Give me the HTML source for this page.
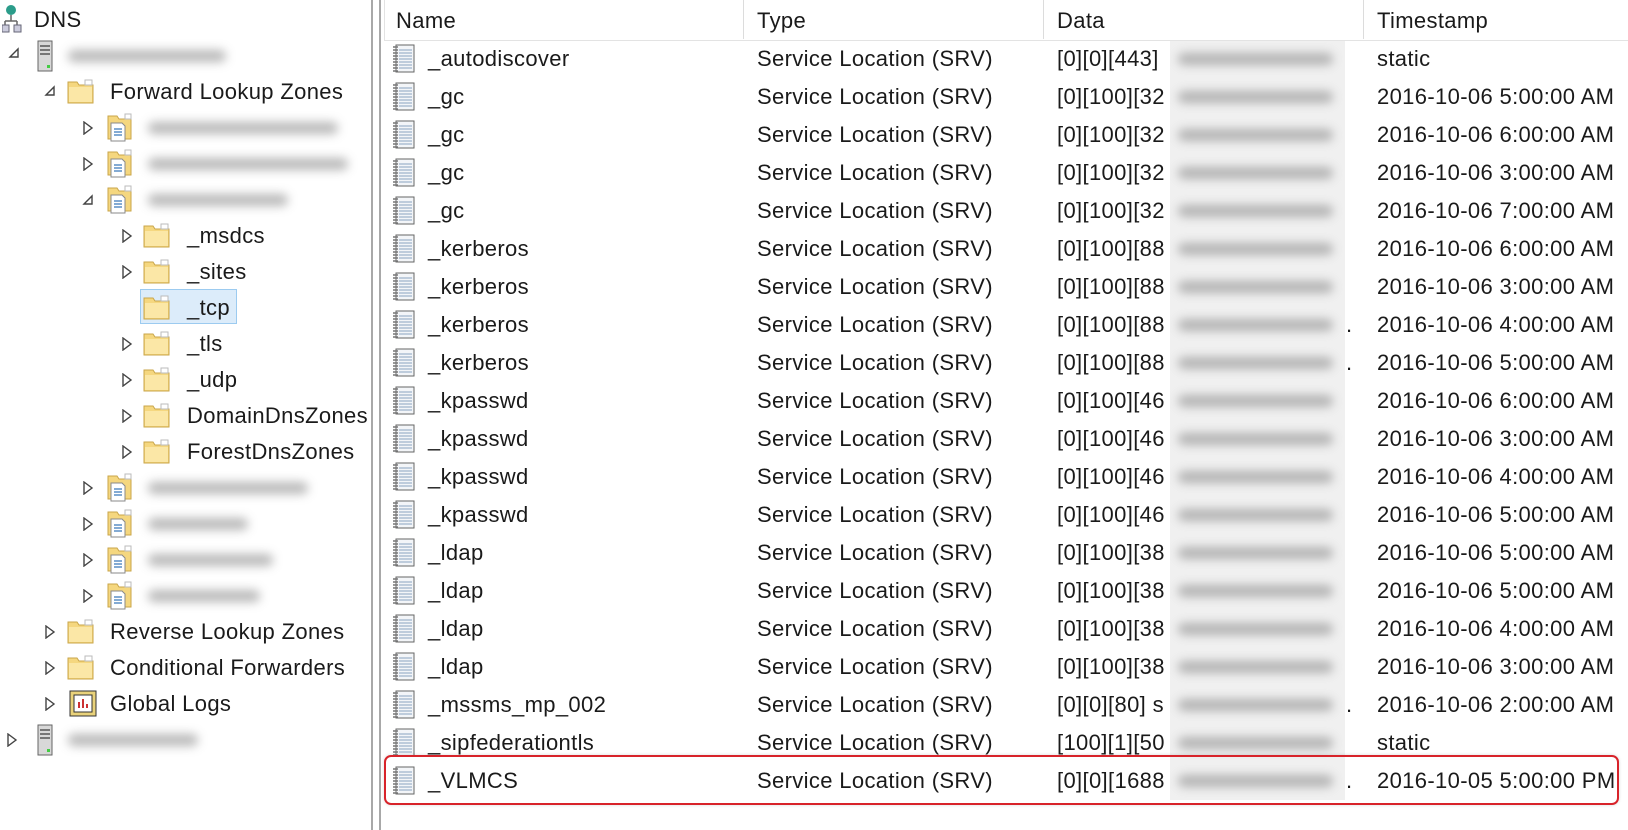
<!DOCTYPE html>
<html><head><meta charset="utf-8">
<style>
body{margin:0;width:1628px;height:830px;background:#fff;overflow:hidden;font-family:"Liberation Sans",sans-serif;font-size:22px;letter-spacing:.35px;color:#1a1a1a;position:relative}
.a{position:absolute;white-space:nowrap}
#left{position:absolute;left:0;top:0;width:371px;height:830px;overflow:hidden}
.tr{position:absolute;height:36px;line-height:36px;white-space:nowrap}
.blur{position:absolute;background:#8a8a8a;filter:blur(5px);opacity:.6;height:12px;border-radius:6px}
.rr{position:absolute;left:384px;height:38px;line-height:37px;width:1244px}
.rr span{position:absolute}
.hd span{position:absolute;top:0;height:39px;border-right:1px solid #dcdcdc}
</style></head><body>
<svg width="0" height="0" style="position:absolute">
<defs>
<symbol id="fold" viewBox="0 0 28 26"><path d="M1 4h9l2 3h14v18H1z" fill="#f5d77f" stroke="#c9a64a"/><path d="M2 9h23v15H2z" fill="#fbe7a6"/><path d="M18 2h7v5h-7z" fill="#fff" stroke="#bbb"/></symbol>
<symbol id="zone" viewBox="0 0 28 30"><path d="M3 3h9l2 3h12v20H3z" fill="#f5d77f" stroke="#c9a64a"/><path d="M6 10h11l3 3v15H6z" fill="#fff" stroke="#8a8a8a"/><path d="M9 16h8M9 19h8M9 22h8" stroke="#5b8fc6" stroke-width="1.5"/><path d="M20 1h6v5h-6z" fill="#fff" stroke="#bbb"/></symbol>
<symbol id="rec" viewBox="0 0 24 30"><rect x="4" y="1" width="18" height="27" fill="#f3f5f8" stroke="#666"/><path d="M7 6h13M7 9h13M7 12h13M7 15h13M7 18h13M7 21h13M7 24h13" stroke="#8aa2c0"/><path d="M1 3h5M1 6h5M1 9h5M1 12h5M1 15h5M1 18h5M1 21h5M1 24h5M1 27h5" stroke="#777" stroke-width="1.4"/></symbol>
<symbol id="srv" viewBox="0 0 18 32"><rect x="2" y="1" width="14" height="30" fill="#d8d8d8" stroke="#666"/><path d="M4 6h10M4 10h10M4 14h10" stroke="#555" stroke-width="1.5"/><rect x="11" y="25" width="3" height="3" fill="#4c4"/></symbol>
<symbol id="opn" viewBox="0 0 12 12"><path d="M2 10L10 2V10Z" fill="none" stroke="#444" stroke-width="1.4"/></symbol>
<symbol id="cls" viewBox="0 0 12 14"><path d="M2 1L10 7L2 13Z" fill="#fff" stroke="#444" stroke-width="1.4"/></symbol>
</defs></svg>

<div id="left">
<svg class="a" style="left:2px;top:4px" width="28" height="30" viewBox="0 0 28 30"><circle cx="9" cy="6" r="5" fill="#2b9c8a"/><path d="M9 11v6M3 17h12M3 17v5M15 17v5" stroke="#666" stroke-width="1.5"/><rect x="0" y="21" width="7" height="7" fill="#ccd" stroke="#667"/><rect x="12" y="21" width="7" height="7" fill="#ccd" stroke="#667"/></svg>
<div class="tr" style="left:34px;top:2px">DNS</div>
<svg class="a" style="left:8px;top:47px" width="12" height="12"><use href="#opn"/></svg>
<svg class="a" style="left:36px;top:40px" width="18" height="32"><use href="#srv"/></svg>
<div class="blur" style="left:68px;top:50px;width:158px"></div>
<svg class="a" style="left:44px;top:85px" width="12" height="12"><use href="#opn"/></svg>
<svg class="a" style="left:67px;top:78px" width="28" height="26"><use href="#fold"/></svg>
<div class="tr" style="left:110px;top:74px">Forward Lookup Zones</div>
<svg class="a" style="left:82px;top:121px" width="12" height="14"><use href="#cls"/></svg>
<svg class="a" style="left:105px;top:113px" width="28" height="30"><use href="#zone"/></svg>
<div class="blur" style="left:148px;top:122px;width:190px"></div>
<svg class="a" style="left:82px;top:157px" width="12" height="14"><use href="#cls"/></svg>
<svg class="a" style="left:105px;top:149px" width="28" height="30"><use href="#zone"/></svg>
<div class="blur" style="left:148px;top:158px;width:200px"></div>
<svg class="a" style="left:82px;top:194px" width="12" height="12"><use href="#opn"/></svg>
<svg class="a" style="left:105px;top:185px" width="28" height="30"><use href="#zone"/></svg>
<div class="blur" style="left:148px;top:194px;width:140px"></div>
<svg class="a" style="left:121px;top:229px" width="12" height="14"><use href="#cls"/></svg>
<svg class="a" style="left:143px;top:222px" width="28" height="26"><use href="#fold"/></svg>
<div class="tr" style="left:187px;top:218px">_msdcs</div>
<svg class="a" style="left:121px;top:265px" width="12" height="14"><use href="#cls"/></svg>
<svg class="a" style="left:143px;top:258px" width="28" height="26"><use href="#fold"/></svg>
<div class="tr" style="left:187px;top:254px">_sites</div>
<div class="a" style="left:140px;top:289px;width:97px;height:35px;background:#dcecfa;border:1px solid #9ccbf0;box-sizing:border-box"></div>
<svg class="a" style="left:143px;top:294px" width="28" height="26"><use href="#fold"/></svg>
<div class="tr" style="left:187px;top:290px">_tcp</div>
<svg class="a" style="left:121px;top:337px" width="12" height="14"><use href="#cls"/></svg>
<svg class="a" style="left:143px;top:330px" width="28" height="26"><use href="#fold"/></svg>
<div class="tr" style="left:187px;top:326px">_tls</div>
<svg class="a" style="left:121px;top:373px" width="12" height="14"><use href="#cls"/></svg>
<svg class="a" style="left:143px;top:366px" width="28" height="26"><use href="#fold"/></svg>
<div class="tr" style="left:187px;top:362px">_udp</div>
<svg class="a" style="left:121px;top:409px" width="12" height="14"><use href="#cls"/></svg>
<svg class="a" style="left:143px;top:402px" width="28" height="26"><use href="#fold"/></svg>
<div class="tr" style="left:187px;top:398px">DomainDnsZones</div>
<svg class="a" style="left:121px;top:445px" width="12" height="14"><use href="#cls"/></svg>
<svg class="a" style="left:143px;top:438px" width="28" height="26"><use href="#fold"/></svg>
<div class="tr" style="left:187px;top:434px">ForestDnsZones</div>
<svg class="a" style="left:82px;top:481px" width="12" height="14"><use href="#cls"/></svg>
<svg class="a" style="left:105px;top:473px" width="28" height="30"><use href="#zone"/></svg>
<div class="blur" style="left:148px;top:482px;width:160px"></div>
<svg class="a" style="left:82px;top:517px" width="12" height="14"><use href="#cls"/></svg>
<svg class="a" style="left:105px;top:509px" width="28" height="30"><use href="#zone"/></svg>
<div class="blur" style="left:148px;top:518px;width:100px"></div>
<svg class="a" style="left:82px;top:553px" width="12" height="14"><use href="#cls"/></svg>
<svg class="a" style="left:105px;top:545px" width="28" height="30"><use href="#zone"/></svg>
<div class="blur" style="left:148px;top:554px;width:125px"></div>
<svg class="a" style="left:82px;top:589px" width="12" height="14"><use href="#cls"/></svg>
<svg class="a" style="left:105px;top:581px" width="28" height="30"><use href="#zone"/></svg>
<div class="blur" style="left:148px;top:590px;width:112px"></div>
<svg class="a" style="left:44px;top:625px" width="12" height="14"><use href="#cls"/></svg>
<svg class="a" style="left:67px;top:618px" width="28" height="26"><use href="#fold"/></svg>
<div class="tr" style="left:110px;top:614px">Reverse Lookup Zones</div>
<svg class="a" style="left:44px;top:661px" width="12" height="14"><use href="#cls"/></svg>
<svg class="a" style="left:67px;top:654px" width="28" height="26"><use href="#fold"/></svg>
<div class="tr" style="left:110px;top:650px">Conditional Forwarders</div>
<svg class="a" style="left:44px;top:697px" width="12" height="14"><use href="#cls"/></svg>
<svg class="a" style="left:68px;top:688px" width="30" height="30" viewBox="0 0 30 30"><rect x="2" y="3" width="26" height="25" fill="#e9d27a" stroke="#333"/><rect x="6" y="7" width="18" height="17" fill="#fff" stroke="#333"/><path d="M11 20v-6M15 20v-9M19 20v-4" stroke="#c33" stroke-width="2"/></svg>
<div class="tr" style="left:110px;top:686px">Global Logs</div>
<svg class="a" style="left:6px;top:733px" width="12" height="14"><use href="#cls"/></svg>
<svg class="a" style="left:36px;top:724px" width="18" height="32"><use href="#srv"/></svg>
<div class="blur" style="left:68px;top:734px;width:130px"></div>
</div>

<div class="a" style="left:371px;top:0;width:2px;height:830px;background:#a8a8a8"></div>
<div class="a" style="left:379px;top:0;width:2px;height:830px;background:#a8a8a8"></div>

<div class="a hd" style="left:384px;top:0;width:1244px;height:40px;border-bottom:1px solid #e3e3e3;border-left:1px solid #e3e3e3">
<span style="left:0;width:358px"></span><span style="left:359px;width:299px"></span><span style="left:659px;width:319px"></span>
</div>
<div class="a" style="left:396px;top:2px;line-height:38px">Name</div>
<div class="a" style="left:757px;top:2px;line-height:38px">Type</div>
<div class="a" style="left:1057px;top:2px;line-height:38px">Data</div>
<div class="a" style="left:1377px;top:2px;line-height:38px">Timestamp</div>

<div class="rr" style="top:40px"><svg style="position:absolute;left:8px;top:4px" width="24" height="30"><use href="#rec"/></svg><span style="left:44px">_autodiscover</span><span style="left:373px">Service Location (SRV)</span><span style="left:673px">[0][0][443]</span><span style="left:993px">static</span></div>
<div class="rr" style="top:78px"><svg style="position:absolute;left:8px;top:4px" width="24" height="30"><use href="#rec"/></svg><span style="left:44px">_gc</span><span style="left:373px">Service Location (SRV)</span><span style="left:673px">[0][100][32</span><span style="left:993px">2016-10-06 5:00:00 AM</span></div>
<div class="rr" style="top:116px"><svg style="position:absolute;left:8px;top:4px" width="24" height="30"><use href="#rec"/></svg><span style="left:44px">_gc</span><span style="left:373px">Service Location (SRV)</span><span style="left:673px">[0][100][32</span><span style="left:993px">2016-10-06 6:00:00 AM</span></div>
<div class="rr" style="top:154px"><svg style="position:absolute;left:8px;top:4px" width="24" height="30"><use href="#rec"/></svg><span style="left:44px">_gc</span><span style="left:373px">Service Location (SRV)</span><span style="left:673px">[0][100][32</span><span style="left:993px">2016-10-06 3:00:00 AM</span></div>
<div class="rr" style="top:192px"><svg style="position:absolute;left:8px;top:4px" width="24" height="30"><use href="#rec"/></svg><span style="left:44px">_gc</span><span style="left:373px">Service Location (SRV)</span><span style="left:673px">[0][100][32</span><span style="left:993px">2016-10-06 7:00:00 AM</span></div>
<div class="rr" style="top:230px"><svg style="position:absolute;left:8px;top:4px" width="24" height="30"><use href="#rec"/></svg><span style="left:44px">_kerberos</span><span style="left:373px">Service Location (SRV)</span><span style="left:673px">[0][100][88</span><span style="left:993px">2016-10-06 6:00:00 AM</span></div>
<div class="rr" style="top:268px"><svg style="position:absolute;left:8px;top:4px" width="24" height="30"><use href="#rec"/></svg><span style="left:44px">_kerberos</span><span style="left:373px">Service Location (SRV)</span><span style="left:673px">[0][100][88</span><span style="left:993px">2016-10-06 3:00:00 AM</span></div>
<div class="rr" style="top:306px"><svg style="position:absolute;left:8px;top:4px" width="24" height="30"><use href="#rec"/></svg><span style="left:44px">_kerberos</span><span style="left:373px">Service Location (SRV)</span><span style="left:673px">[0][100][88</span><span style="left:962px">.</span><span style="left:993px">2016-10-06 4:00:00 AM</span></div>
<div class="rr" style="top:344px"><svg style="position:absolute;left:8px;top:4px" width="24" height="30"><use href="#rec"/></svg><span style="left:44px">_kerberos</span><span style="left:373px">Service Location (SRV)</span><span style="left:673px">[0][100][88</span><span style="left:962px">.</span><span style="left:993px">2016-10-06 5:00:00 AM</span></div>
<div class="rr" style="top:382px"><svg style="position:absolute;left:8px;top:4px" width="24" height="30"><use href="#rec"/></svg><span style="left:44px">_kpasswd</span><span style="left:373px">Service Location (SRV)</span><span style="left:673px">[0][100][46</span><span style="left:993px">2016-10-06 6:00:00 AM</span></div>
<div class="rr" style="top:420px"><svg style="position:absolute;left:8px;top:4px" width="24" height="30"><use href="#rec"/></svg><span style="left:44px">_kpasswd</span><span style="left:373px">Service Location (SRV)</span><span style="left:673px">[0][100][46</span><span style="left:993px">2016-10-06 3:00:00 AM</span></div>
<div class="rr" style="top:458px"><svg style="position:absolute;left:8px;top:4px" width="24" height="30"><use href="#rec"/></svg><span style="left:44px">_kpasswd</span><span style="left:373px">Service Location (SRV)</span><span style="left:673px">[0][100][46</span><span style="left:993px">2016-10-06 4:00:00 AM</span></div>
<div class="rr" style="top:496px"><svg style="position:absolute;left:8px;top:4px" width="24" height="30"><use href="#rec"/></svg><span style="left:44px">_kpasswd</span><span style="left:373px">Service Location (SRV)</span><span style="left:673px">[0][100][46</span><span style="left:993px">2016-10-06 5:00:00 AM</span></div>
<div class="rr" style="top:534px"><svg style="position:absolute;left:8px;top:4px" width="24" height="30"><use href="#rec"/></svg><span style="left:44px">_ldap</span><span style="left:373px">Service Location (SRV)</span><span style="left:673px">[0][100][38</span><span style="left:993px">2016-10-06 5:00:00 AM</span></div>
<div class="rr" style="top:572px"><svg style="position:absolute;left:8px;top:4px" width="24" height="30"><use href="#rec"/></svg><span style="left:44px">_ldap</span><span style="left:373px">Service Location (SRV)</span><span style="left:673px">[0][100][38</span><span style="left:993px">2016-10-06 5:00:00 AM</span></div>
<div class="rr" style="top:610px"><svg style="position:absolute;left:8px;top:4px" width="24" height="30"><use href="#rec"/></svg><span style="left:44px">_ldap</span><span style="left:373px">Service Location (SRV)</span><span style="left:673px">[0][100][38</span><span style="left:993px">2016-10-06 4:00:00 AM</span></div>
<div class="rr" style="top:648px"><svg style="position:absolute;left:8px;top:4px" width="24" height="30"><use href="#rec"/></svg><span style="left:44px">_ldap</span><span style="left:373px">Service Location (SRV)</span><span style="left:673px">[0][100][38</span><span style="left:993px">2016-10-06 3:00:00 AM</span></div>
<div class="rr" style="top:686px"><svg style="position:absolute;left:8px;top:4px" width="24" height="30"><use href="#rec"/></svg><span style="left:44px">_mssms_mp_002</span><span style="left:373px">Service Location (SRV)</span><span style="left:673px">[0][0][80] s</span><span style="left:962px">.</span><span style="left:993px">2016-10-06 2:00:00 AM</span></div>
<div class="rr" style="top:724px"><svg style="position:absolute;left:8px;top:4px" width="24" height="30"><use href="#rec"/></svg><span style="left:44px">_sipfederationtls</span><span style="left:373px">Service Location (SRV)</span><span style="left:673px">[100][1][50</span><span style="left:993px">static</span></div>
<div class="rr" style="top:762px"><svg style="position:absolute;left:8px;top:4px" width="24" height="30"><use href="#rec"/></svg><span style="left:44px">_VLMCS</span><span style="left:373px">Service Location (SRV)</span><span style="left:673px">[0][0][1688</span><span style="left:962px">.</span><span style="left:993px">2016-10-05 5:00:00 PM</span></div>

<div class="a" style="left:1170px;top:41px;width:175px;height:759px;background:#f0f0f0"></div>
<div class="a" style="left:1170px;top:41px;width:175px;height:759px;overflow:hidden">
<div class="blur" style="left:8px;top:12px;width:155px"></div><div class="blur" style="left:8px;top:50px;width:155px"></div><div class="blur" style="left:8px;top:88px;width:155px"></div><div class="blur" style="left:8px;top:126px;width:155px"></div><div class="blur" style="left:8px;top:164px;width:155px"></div><div class="blur" style="left:8px;top:202px;width:155px"></div><div class="blur" style="left:8px;top:240px;width:155px"></div><div class="blur" style="left:8px;top:278px;width:155px"></div><div class="blur" style="left:8px;top:316px;width:155px"></div><div class="blur" style="left:8px;top:354px;width:155px"></div><div class="blur" style="left:8px;top:392px;width:155px"></div><div class="blur" style="left:8px;top:430px;width:155px"></div><div class="blur" style="left:8px;top:468px;width:155px"></div><div class="blur" style="left:8px;top:506px;width:155px"></div><div class="blur" style="left:8px;top:544px;width:155px"></div><div class="blur" style="left:8px;top:582px;width:155px"></div><div class="blur" style="left:8px;top:620px;width:155px"></div><div class="blur" style="left:8px;top:658px;width:155px"></div><div class="blur" style="left:8px;top:696px;width:155px"></div><div class="blur" style="left:8px;top:734px;width:155px"></div>
</div>

<div class="a" style="left:384px;top:755px;width:1235px;height:50px;border:2px solid #d8232a;border-radius:7px;box-sizing:border-box;box-shadow:0 0 3px rgba(0,0,0,.15)"></div>
</body></html>
